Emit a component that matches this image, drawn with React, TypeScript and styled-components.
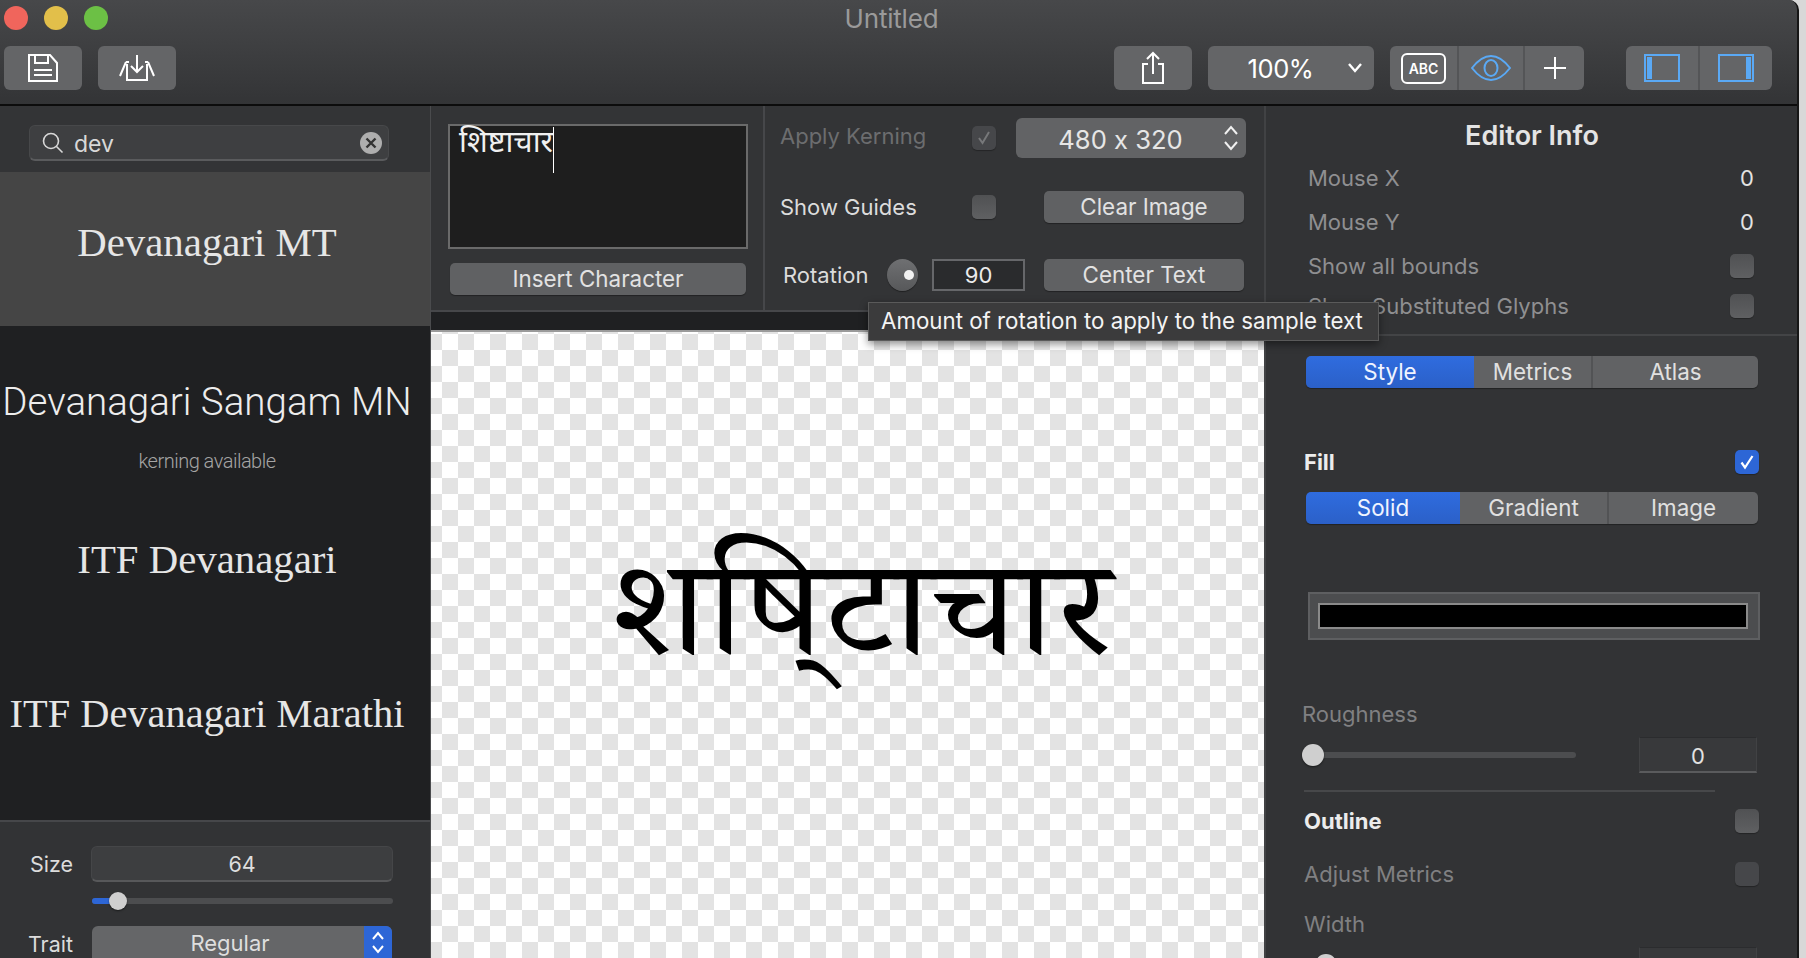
import React from "react";
import styled, { createGlobalStyle } from "styled-components";

const Global = createGlobalStyle`
  html, body { margin: 0; padding: 0; background: #c9c9c9; overflow: hidden; }
  * { box-sizing: border-box; }
`;
const UI = `Inter, "Noto Sans", "Noto Sans Devanagari", "Lohit Devanagari", "FreeSans", sans-serif`;
const SERIF = `"Liberation Serif", "Noto Serif Devanagari", serif`;
const DEV = `"Noto Sans Devanagari", "Lohit Devanagari", "Mukta", "Noto Serif Devanagari", "FreeSerif", "FreeSans", "Noto Sans", sans-serif`;
const DEV_SERIF = `"Noto Serif Devanagari", "Lohit Devanagari", "FreeSerif", "Noto Sans Devanagari", serif`;

const Page = styled.div`
  width: 1806px; height: 958px; overflow: hidden; display: flex;
  background: linear-gradient(90deg, #8d8d8d, #d8d8d8 60%);
  font-family: ${UI}; font-feature-settings: "calt" 0;
`;
const Win = styled.div`
  width: 1799px; height: 958px; position: relative; display: flex; flex-direction: column;
  border-top-right-radius: 10px; overflow: hidden; background: #323335; border-right: 2px solid #161616;
`;
const TitleBar = styled.header`
  height: 106px; flex: none; border-bottom: 2px solid #0c0c0c;
  background: linear-gradient(#47484a, #333436);
  display: flex; flex-direction: column; padding: 0 4px;
`;
const TopRow = styled.div`height: 36px; position: relative; display: flex; align-items: center; justify-content: center;`;
const Lights = styled.div`position: absolute; left: 0; top: 6px; display: flex; gap: 16px;`;
const Light = styled.span<{ $c: string }>`width: 24px; height: 24px; border-radius: 50%; background: ${p => p.$c};`;
const Title = styled.div`font-size: 26px; color: #9a9a9a; letter-spacing: -.2px; margin-left: -14px;`;
const Tools = styled.div`display: flex; align-items: center; margin-top: 10px; height: 44px;`;
const ToolBtn = styled.div<{ $w: number; $ml?: number }>`
  width: ${p => p.$w}px; height: 44px; margin-left: ${p => p.$ml ?? 0}px; border-radius: 6px; flex: none;
  background: #646567; display: flex; align-items: center; justify-content: center; color: #fff; position: relative;
`;
const ToolCell = styled.div<{ $w: number; $line?: boolean }>`
  width: ${p => p.$w}px; height: 44px; display: flex; align-items: center; justify-content: center;
  border-right: ${p => p.$line ? "2px solid #545557" : "none"};
`;
const Zoom = styled.span`font-size: 25.5px; color: #fff; letter-spacing: -.4px; margin-right: 21px;`;
const ChevronAt = styled.span`position: absolute; right: 11px; top: 15px; display: flex;`;
const AbcBox = styled.span`
  width: 45px; height: 31px; border: 2px solid #fff; border-radius: 6px; font-size: 14px; font-weight: 600;
  display: flex; align-items: center; justify-content: center; color: #fff;
`;
const Body = styled.div`flex: 1; display: flex; min-height: 0;`;

const Sidebar = styled.aside`width: 431px; flex: none; display: flex; flex-direction: column; border-right: 1px solid #4a4b4d;`;
const SearchWrap = styled.div`height: 66px; padding: 19px 0 0 29px; background: #333436; flex: none;`;
const Search = styled.div`
  width: 360px; height: 36px; background: #3e3f41; border-radius: 6px; border: 1px solid #47484a; border-bottom: 2px solid #5a5b5d;
  display: flex; align-items: center; padding: 0 6px 0 12px; color: #d8d8d8; font-size: 23px;
`;
const SearchText = styled.span`flex: 1; margin-left: 10px; padding-top: 2px;`;
const Clear = styled.span`
  width: 22px; height: 22px; border-radius: 50%; background: #aeaeae; display: flex; align-items: center; justify-content: center;
`;
const FontList = styled.div`height: 650px; flex: none; background: #1f2022; border-bottom: 2px solid #46474a;`;
const FontRow = styled.div<{ $sel?: boolean; $h: number; $pb?: number; $pt?: number }>`
  height: ${p => p.$h}px; background: ${p => p.$sel ? "#454545" : "transparent"}; color: #e8e8e8;
  padding: ${p => p.$pt ?? 0}px 16px ${p => p.$pb ?? 0}px 0;
  display: flex; flex-direction: column; align-items: center; justify-content: center; white-space: nowrap;
`;
const SerifName = styled.div<{ $s: number }>`font-family: ${SERIF}; font-size: ${p => p.$s}px; color: #e6e6e6;`;
const SansName = styled.div`font-family: "Roboto", sans-serif; font-size: 38.5px; font-weight: 300; color: #ededed;`;
const Kern = styled.div`font-family: "Roboto", sans-serif; font-size: 20px; font-weight: 300; color: #a5a5a5; margin-top: 25px; letter-spacing: -.5px;`;
const Bottom = styled.div`flex: 1; background: #323335; padding: 24px 37px 0 0;`;
const BotRow = styled.div<{ $mt?: number }>`display: flex; align-items: center; gap: 18px; margin-top: ${p => p.$mt ?? 0}px;`;
const BotLabel = styled.div`width: 73px; text-align: right; font-size: 21.5px; color: #dcdcdc; flex: none;`;
const SizeInput = styled.div`
  flex: 1; height: 36px; background: #3d3e40; border: 1px solid #454648; border-bottom: 2px solid #57585a; border-radius: 6px;
  display: flex; align-items: center; justify-content: center; color: #dedede; font-size: 21.5px;
`;
const SliderWrap = styled.div`height: 18px; margin: 10px 0 0 92px; position: relative; display: flex; align-items: center;`;
const Track = styled.div<{ $w?: number }>`
  height: 6px; border-radius: 3px; background: #4c4d4f; width: ${p => p.$w ? p.$w + "px" : "100%"}; overflow: hidden;
`;
const Fill = styled.div`height: 100%; background: #2d66d6;`;
const Thumb = styled.span<{ $d: number }>`
  position: absolute; top: 50%; width: ${p => p.$d}px; height: ${p => p.$d}px; margin-top: -${p => p.$d / 2}px;
  border-radius: 50%; background: #cfcfcf; box-shadow: 0 1px 2px rgba(0,0,0,.5);
`;
const Select = styled.div`
  flex: none; width: 300px; height: 36px; background: #656668; border-radius: 6px 6px 0 0; display: flex; color: #dedede; font-size: 22px; overflow: hidden; margin-left: 1px;
`;
const SelectText = styled.div`flex: 1; text-align: center; line-height: 34px; padding-left: 4px;`;
const SelectBlue = styled.div`width: 28px; background: #2d66d6; display: flex; justify-content: center; padding-top: 5px;`;

const Main = styled.main`width: 833px; flex: none; display: flex; flex-direction: column; position: relative;`;
const Controls = styled.div`height: 206px; flex: none; display: flex; background: #333436; border-bottom: 2px solid #46474a;`;
const EditCol = styled.div`
  width: 334px; flex: none; border-right: 2px solid #46474a; padding: 18px 0 0 17px;
  display: flex; flex-direction: column;
`;
const TextArea = styled.div`
  width: 300px; height: 125px; background: #1e1e1e; border: 2px solid #6a6a6a; padding: 0 0 0 9px; display: flex; align-items: flex-start;
`;
const TextAreaValue = styled.span`font-family: ${DEV}; color: #f0f0f0; font-size: 30.5px; line-height: 36px; white-space: nowrap; border-right: 1.5px solid #fff; height: 46px; margin-top: 1px;`;
const Btn = styled.div<{ $w: number; $h?: number; $ml?: number }>`
  width: ${p => p.$w}px; height: ${p => p.$h ?? 32}px; background: #606163; border-radius: 5px; flex: none; color: #e2e2e2;
  margin-left: ${p => p.$ml ?? 0}px; font-size: 22.4px; display: flex; align-items: center; justify-content: center; padding-bottom: 1px;
  box-shadow: 0 1px 1px rgba(0,0,0,.35);
`;
const InsertGap = styled.div`height: 14px; flex: none;`;
const OptCol = styled.div`flex: 1; padding: 12px 0 0 15px; display: flex; flex-direction: column;`;
const OptRow = styled.div<{ $h: number; $mt?: number }>`height: ${p => p.$h}px; margin-top: ${p => p.$mt ?? 0}px; display: flex; align-items: center;`;
const OptLabel = styled.div<{ $w: number; $dim?: boolean; $ml?: number; $up?: number }>`
  width: ${p => p.$w}px; margin-left: ${p => p.$ml ?? 0}px; flex: none; font-size: 22px; color: ${p => p.$dim ? "#6c6d6f" : "#dcdcdc"};
  padding-bottom: ${p => p.$up ?? 0}px;
`;
const Check = styled.span<{ $on?: boolean; $dark?: boolean }>`
  width: 24px; height: 24px; flex: none; border-radius: 5px; display: flex; align-items: center; justify-content: center;
  background: ${p => p.$on ? "#2d66d6" : p.$dark ? "#46474a" : "linear-gradient(#505153, #5f6062)"};
  box-shadow: 0 1px 1px rgba(0,0,0,.3);
`;
const Popup = styled.div`
  width: 230px; height: 40px; margin-left: 20px; flex: none; background: #626365; border-radius: 6px; position: relative;
  display: flex; align-items: center; justify-content: center; padding: 2px 21px 0 0; font-size: 25.6px; color: #e6e6e6;
`;
const PopupArrows = styled.span`position: absolute; right: 7px; top: 6px; display: flex;`;
const Knob = styled.span`
  width: 31px; height: 32px; flex: none; border-radius: 50%; background: linear-gradient(#6f7072, #57585a); display: flex; align-items: center; justify-content: flex-end; padding-right: 4px;
  box-shadow: 0 1px 1px rgba(0,0,0,.4);
`;
const KnobDot = styled.span`width: 10px; height: 10px; border-radius: 50%; background: #f2f2f2;`;
const RotInput = styled.div`
  width: 93px; height: 32px; margin: 0 19px 0 14px; flex: none; background: #2a2b2d; border: 2px solid #66676a; display: flex; align-items: center; justify-content: center; color: #ececec; font-size: 22px;
`;
const Strip = styled.div`height: 20px; flex: none; background: #1f2022; border-bottom: 2px solid #9a9a9a;`;
const Canvas = styled.div`
  flex: 1; display: flex; align-items: flex-start; justify-content: center; overflow: hidden;
  background-color: #fff;
  background-image: conic-gradient(#e3e3e3 25%, #fff 0 50%, #e3e3e3 0 75%, #fff 0);
  background-size: 32px 32px;
  background-position: -5px 18px;
`;
const Sample = styled.div`
  font-family: ${DEV_SERIF}; color: #000; font-size: 134px; line-height: 160px; margin: 222px 0 0 26px; white-space: nowrap;
  transform: scaleX(1.124);
`;
const Tip = styled.div`
  position: absolute; left: 437px; top: 196px; width: 511px; height: 39px; background: #3b3b3c; border: 1px solid #5a5a5a;
  box-shadow: 0 3px 8px rgba(0,0,0,.45); color: #f4f4f4; font-size: 22.3px; line-height: 35px; padding-left: 12px; white-space: nowrap; z-index: 2;
`;

const Inspector = styled.aside`flex: 1; background: #323335; border-left: 2px solid #414244; min-width: 0;`;
const InfoSection = styled.section`height: 230px; border-bottom: 2px solid #434446; padding: 15px 43px 0 42px;`;
const InfoTitle = styled.h2`margin: 0 0 5px 0; height: 30px; line-height: 30px; font-size: 27px; font-weight: 600; color: #e4e4e4; text-align: center; padding-left: 2px;`;
const InfoRow = styled.div<{ $h: number }>`height: ${p => p.$h}px; display: flex; align-items: center; justify-content: space-between; font-size: 22px; color: #8f8f91;`;
const InfoVal = styled.span`color: #e2e2e2;`;
const Seg = styled.div<{ $mt: number }>`
  margin: ${p => p.$mt}px 0 0 40px; width: 452px; height: 32px; display: flex; border-radius: 5px; overflow: hidden;
  box-shadow: 0 1px 1px rgba(0,0,0,.35);
`;
const SegItem = styled.div<{ $w: number; $on?: boolean; $line?: boolean }>`
  width: ${p => p.$w}px; background: ${p => p.$on ? "linear-gradient(#2f6cdf, #2b60c8)" : "#616264"}; color: ${p => p.$on ? "#f0f4ff" : "#e0e0e0"};
  font-size: 22.4px; display: flex; align-items: center; justify-content: center; padding-bottom: 1px;
  border-right: ${p => p.$line ? "2px solid #525355" : "none"};
`;
const Group = styled.div`padding: 0 38px 0 38px;`;
const HeadRow = styled.div<{ $mt: number }>`
  margin-top: ${p => p.$mt}px; height: 24px; display: flex; align-items: center; justify-content: space-between;
  font-size: 22px; font-weight: 700; color: #ececec;
`;
const DimRow = styled(HeadRow)`font-weight: 400; color: #808082;`;
const Swatch = styled.div`margin: 68px 37px 0 42px; height: 48px; background: #4c4d4f; border: 2px solid #5e5f61; padding: 9px 10px 9px 8px;`;
const SwatchInner = styled.div`height: 26px; background: #000; border: 2px solid #8a8a8a;`;
const DimLabel = styled.div<{ $mt: number; $ml: number }>`margin: ${p => p.$mt}px 0 0 ${p => p.$ml}px; font-size: 22px; line-height: 28px; color: #808082;`;
const SlideRow = styled.div<{ $mt: number }>`margin: ${p => p.$mt}px 40px 0 36px; height: 36px; display: flex; align-items: center; justify-content: space-between; position: relative;`;
const NumField = styled.div`
  width: 118px; height: 36px; background: #38393b; border-top: 1px solid #2b2c2e; border-bottom: 2px solid #5a5b5d; border-left: 1px solid #414244; border-right: 1px solid #414244;
  display: flex; align-items: center; justify-content: center; color: #e2e2e2; font-size: 22px; padding-top: 2px;
`;
const Rule = styled.div`margin: 17px 82px 0 38px; height: 2px; background: #47484a;`;

const Blue = "#5aa9f5";

const App: React.FC = () => (
  <Page>
    <Global />
    <Win>
      <TitleBar>
        <TopRow>
          <Lights>
            <Light $c="#f0655c" /><Light $c="#e2bf4a" /><Light $c="#6cc045" />
          </Lights>
          <Title>Untitled</Title>
        </TopRow>
        <Tools>
          <ToolBtn $w={78} $ml={0}>
            <svg width="32" height="30" viewBox="0 0 32 30" fill="none" stroke="#fff" strokeWidth="2">
              <path d="M2 2h21l7 8v18H2z" /><path d="M8 2v8h13V2" /><path d="M7 17h18M7 22h18" />
            </svg>
          </ToolBtn>
          <ToolBtn $w={78} $ml={16}>
            <svg width="36" height="28" viewBox="0 0 36 28" fill="none" stroke="#fff" strokeWidth="2">
              <path d="M7 8h3M26 8h3M7 8L1 22M29 8l6 14" /><path d="M8 10v16h20V10" /><path d="M18 1v17M12 12l6 6 6-6" />
            </svg>
          </ToolBtn>
          <ToolBtn $w={78} $ml={938}>
            <svg width="24" height="34" viewBox="0 0 24 34" fill="none" stroke="#fff" strokeWidth="2">
              <path d="M7 13H2v19h20V13h-5" /><path d="M12 23V2M6 8l6-6 6 6" />
            </svg>
          </ToolBtn>
          <ToolBtn $w={166} $ml={16}>
            <Zoom>100%</Zoom>
            <ChevronAt><svg width="16" height="14" viewBox="0 0 16 14" fill="none" stroke="#fff" strokeWidth="2.4"><path d="M2 3l6 7 6-7" /></svg></ChevronAt>
          </ToolBtn>
          <ToolBtn $w={194} $ml={16}>
            <ToolCell $w={69} $line><AbcBox>ABC</AbcBox></ToolCell>
            <ToolCell $w={66} $line>
              <svg width="40" height="26" viewBox="0 0 40 26" fill="none" stroke={Blue} strokeWidth="2">
                <path d="M1 13C8 4 14 1 20 1s12 3 19 12c-7 9-13 12-19 12S8 22 1 13z" /><ellipse cx="20" cy="13" rx="6.5" ry="8" />
              </svg>
            </ToolCell>
            <ToolCell $w={59}>
              <svg width="24" height="24" viewBox="0 0 24 24" stroke="#fff" strokeWidth="2"><path d="M12 1v22M1 12h22" /></svg>
            </ToolCell>
          </ToolBtn>
          <ToolBtn $w={146} $ml={42}>
            <ToolCell $w={74} $line>
              <svg width="36" height="28" viewBox="0 0 36 28" fill="none" stroke={Blue} strokeWidth="2"><rect x="1" y="1" width="34" height="26" /><rect x="4" y="4" width="3" height="20" fill={Blue} /></svg>
            </ToolCell>
            <ToolCell $w={72}>
              <svg width="36" height="28" viewBox="0 0 36 28" fill="none" stroke={Blue} strokeWidth="2"><rect x="1" y="1" width="34" height="26" /><rect x="29" y="4" width="3" height="20" fill={Blue} /></svg>
            </ToolCell>
          </ToolBtn>
        </Tools>
      </TitleBar>
      <Body>
        <Sidebar>
          <SearchWrap>
            <Search>
              <svg width="22" height="22" viewBox="0 0 22 22" fill="none" stroke="#d8d8d8" strokeWidth="1.6"><circle cx="9" cy="9" r="7.5" /><path d="M14.5 14.5l6 6" /></svg>
              <SearchText>dev</SearchText>
              <Clear><svg width="12" height="12" viewBox="0 0 12 12" stroke="#333" strokeWidth="2.4"><path d="M1.5 1.5l9 9M10.5 1.5l-9 9" /></svg></Clear>
            </Search>
          </SearchWrap>
          <FontList>
            <FontRow $sel $h={154} $pb={14}><SerifName $s={40.8}>Devanagari MT</SerifName></FontRow>
            <FontRow $h={166} $pt={34}><SansName>Devanagari Sangam MN</SansName><Kern>kerning available</Kern></FontRow>
            <FontRow $h={152} $pb={18}><SerifName $s={40.8}>ITF Devanagari</SerifName></FontRow>
            <FontRow $h={156} $pb={18}><SerifName $s={40.4}>ITF Devanagari Marathi</SerifName></FontRow>
          </FontList>
          <Bottom>
            <BotRow><BotLabel>Size</BotLabel><SizeInput>64</SizeInput></BotRow>
            <SliderWrap>
              <Track><Fill style={{ width: "9%" }} /></Track>
              <Thumb $d={18} style={{ left: 17 }} />
            </SliderWrap>
            <BotRow $mt={16}>
              <BotLabel>Trait</BotLabel>
              <Select>
                <SelectText>Regular</SelectText>
                <SelectBlue><svg width="14" height="24" viewBox="0 0 14 24" fill="none" stroke="#fff" strokeWidth="2"><path d="M2 8l5-6 5 6M2 15l5 6 5-6" /></svg></SelectBlue>
              </Select>
            </BotRow>
          </Bottom>
        </Sidebar>
        <Main>
          <Controls>
            <EditCol>
              <TextArea><TextAreaValue>शिष्टाचार</TextAreaValue></TextArea>
              <InsertGap />
              <Btn $w={296} $ml={2}>Insert Character</Btn>
            </EditCol>
            <OptCol>
              <OptRow $h={40}>
                <OptLabel $w={192} $dim $up={4}>Apply Kerning</OptLabel>
                <Check $dark><svg width="16" height="16" viewBox="0 0 16 16" fill="none" stroke="#77787a" strokeWidth="2"><path d="M3 8l3.5 5L13 2" /></svg></Check>
                <Popup>
                  480 x 320
                  <PopupArrows><svg width="16" height="28" viewBox="0 0 16 28" fill="none" stroke="#f0f0f0" strokeWidth="2"><path d="M2 10l6-7 6 7M2 18l6 7 6-7" /></svg></PopupArrows>
                </Popup>
              </OptRow>
              <OptRow $h={32} $mt={33}>
                <OptLabel $w={192}>Show Guides</OptLabel>
                <Check />
                <Btn $w={200} $ml={48}>Clear Image</Btn>
              </OptRow>
              <OptRow $h={32} $mt={36}>
                <OptLabel $w={104} $ml={3}>Rotation</OptLabel>
                <Knob><KnobDot /></Knob>
                <RotInput>90</RotInput>
                <Btn $w={200}>Center Text</Btn>
              </OptRow>
            </OptCol>
          </Controls>
          <Strip />
          <Canvas><Sample>शषि्‌टाचार</Sample></Canvas>
          <Tip>Amount of rotation to apply to the sample text</Tip>
        </Main>
        <Inspector>
          <InfoSection>
            <InfoTitle>Editor Info</InfoTitle>
            <InfoRow $h={44}>Mouse X<InfoVal>0</InfoVal></InfoRow>
            <InfoRow $h={44}>Mouse Y<InfoVal>0</InfoVal></InfoRow>
            <InfoRow $h={44}>Show all bounds<Check /></InfoRow>
            <InfoRow $h={36}>Show Substituted Glyphs<Check /></InfoRow>
          </InfoSection>
          <Seg $mt={20}>
            <SegItem $w={168} $on>Style</SegItem>
            <SegItem $w={119} $line>Metrics</SegItem>
            <SegItem $w={165}>Atlas</SegItem>
          </Seg>
          <Group>
            <HeadRow $mt={62}>Fill<Check $on><svg width="16" height="16" viewBox="0 0 16 16" fill="none" stroke="#fff" strokeWidth="2.2"><path d="M2.5 8.5l3.5 5L13.5 2" /></svg></Check></HeadRow>
          </Group>
          <Seg $mt={18}>
            <SegItem $w={154} $on>Solid</SegItem>
            <SegItem $w={149} $line>Gradient</SegItem>
            <SegItem $w={149}>Image</SegItem>
          </Seg>
          <Swatch><SwatchInner /></Swatch>
          <DimLabel $mt={60} $ml={36}>Roughness</DimLabel>
          <SlideRow $mt={9}>
            <Track $w={274} />
            <Thumb $d={22} style={{ left: 0 }} />
            <NumField>0</NumField>
          </SlideRow>
          <Rule />
          <Group>
            <HeadRow $mt={17}>Outline<Check /></HeadRow>
            <DimRow $mt={29}>Adjust Metrics<Check $dark /></DimRow>
          </Group>
          <DimLabel $mt={24} $ml={38}>Width</DimLabel>
          <SlideRow $mt={9}>
            <Track $w={274} />
            <Thumb $d={22} style={{ left: 13 }} />
            <NumField />
          </SlideRow>
        </Inspector>
      </Body>
    </Win>
  </Page>
);
export default App;
